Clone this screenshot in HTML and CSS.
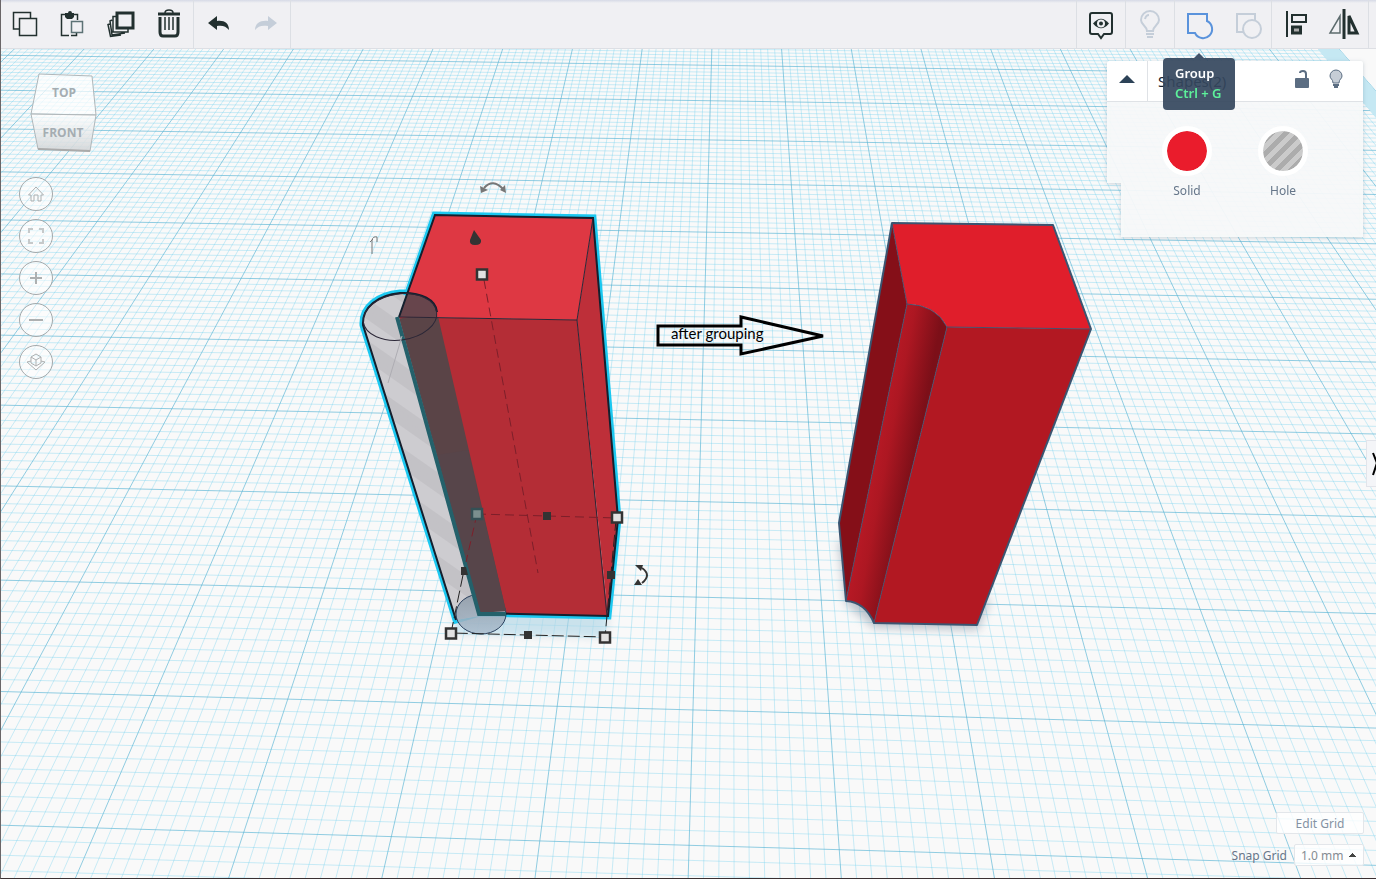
FILE: index.html
```html
<!DOCTYPE html>
<html lang="en">
<head>
    <meta charset="UTF-8">
    <meta name="viewport" content="width=device-width, initial-scale=1.0">
    <title>3D Editor</title>
    <link rel="stylesheet" href="styles.css">
</head>
<body>
    <svg class="scene" viewBox="0 0 1376 879" preserveAspectRatio="xMidYMid slice" aria-label="Workplane">
        <defs>
            <linearGradient id="groove" gradientUnits="userSpaceOnUse" x1="872" y1="455" x2="914" y2="463">
                <stop offset="0" stop-color="#b81925"/>
                <stop offset="0.35" stop-color="#ad1722"/>
                <stop offset="1" stop-color="#7c0f18"/>
            </linearGradient>
            <linearGradient id="shade" x1="0" y1="0" x2="0" y2="1">
                <stop offset="0" stop-color="#8d99a6" stop-opacity="0.85"/>
                <stop offset="1" stop-color="#a9bccd" stop-opacity="0.85"/>
            </linearGradient>
            <pattern id="hatch" width="34" height="34" patternUnits="userSpaceOnUse" patternTransform="rotate(35)">
                <rect width="34" height="34" fill="#c9c8cc"/>
                <rect width="34" height="17" fill="#bebcc1"/>
            </pattern>
            <filter id="soft" x="-20%" y="-20%" width="140%" height="140%">
                <feGaussianBlur stdDeviation="5"/>
            </filter>
            <clipPath id="box-front"><path d="M399 317L577 320L608 616L480 613Z"/></clipPath>
            <clipPath id="box-top"><path d="M435 215L593 218L577 320L399 317Z"/></clipPath>
        </defs>
        <rect width="1376" height="879" fill="#f9f9f9"/>
        <path id="minor" class="grid-minor"/>
        <path id="major" class="grid-major"/>
        <path id="border" class="grid-border"/>

        <!-- box and hole before grouping -->
        <g>
            <path d="M452 600L618 530L606 637L456 634Z" fill="#8fb4c8" opacity="0.35" filter="url(#soft)"/>
            <path d="M458 617L608 617L605 636L453 632Z" fill="#bfe6f4" opacity="0.4"/>
            <path class="glow" d="M435 215L593 218L618 519L608 616L480 613L456 620L363 325C362 307 378 295 400 293L408 293Z"/>
            <path d="M363 325C362 307 378 294 400 293L437 312L506 611L456 620Z" fill="#f2f3f4"/>
            <path d="M363 325C362 307 378 294 400 293L437 312L506 611L456 620Z" fill="url(#hatch)" opacity="0.9"/>
            <path d="M435 215L593 218L577 320L399 317Z" fill="#de3843"/>
            <path d="M399 317L577 320L608 616L480 613Z" fill="#b42d36"/>
            <path d="M593 218L618 519L608 616L577 320Z" fill="#be2f39"/>
            <path d="M363 325L437 312L506 611L456 620Z" fill="#5a4447" clip-path="url(#box-front)"/>
            <g clip-path="url(#box-top)">
                <ellipse cx="400" cy="317" rx="37" ry="23" transform="rotate(-8 400 317)" fill="#67454c"/>
            </g>
            <ellipse cx="481" cy="614" rx="25" ry="20" fill="url(#shade)" stroke="#2a3f5c"/>
            <path d="M480 613L437 455L468 450L506 611Z" fill="#57454a" clip-path="url(#box-front)"/>
            <g class="edge">
                <path d="M399 317L435 215L593 218L618 519L608 616L480 613"/>
                <path d="M456 620L363 325C362 307 378 295 400 293C422 292 436 300 437 312"/>
            </g>
            <path d="M397 317L479 614H506" stroke="#24616b" stroke-width="4" fill="none"/>
            <g class="edge-thin">
                <ellipse cx="400" cy="317" rx="37" ry="23" transform="rotate(-8 400 317)"/>
                <path d="M399 317L577 320L593 218M577 320L607 616"/>
            </g>
            <path d="M388 383L402 336" stroke="#aeadb3" fill="none"/>
            <path class="dash-dark" d="M484 280L538 573M477 514L617 518M477 514L466 562"/>
            <path class="dash" d="M463 575L451 633L605 637L616 520"/>
            <g class="handle">
                <rect x="477" y="269.500" width="10" height="10"/>
                <rect x="612" y="512.500" width="10" height="10"/>
                <rect x="446" y="628.500" width="10" height="10"/>
                <rect x="600" y="632.500" width="10" height="10"/>
                <rect x="472" y="509" width="10" height="10" class="handle-behind"/>
            </g>
            <path d="M543 512h8v8h-8zM461 567h5l2 8h-7zM607 571h8v8h-8zM524 631h8v8h-8z" fill="#333"/>
            <path d="M474 230L481 240Q482 245 475 245Q469 245 470 240Z" fill="#333"/>
            <g fill="none" stroke="#777" stroke-width="2">
                <path d="M484 188Q493 178 503 189"/>
                <path d="M480 186L481 193L488 190ZM500 190L506 193L505 185Z" fill="#777" stroke="none"/>
                <path d="M372 254V240Q373 236 377 237V242M370 242L373 239" stroke-width="1"/>
            </g>
            <path d="M642 568Q652 575 642 583" fill="none" stroke="#333" stroke-width="2"/>
            <path d="M635 565L643 565L641 571ZM634 585L638 579L642 585Z" fill="#333"/>
        </g>

        <!-- annotation -->
        <path d="M658 326H741V317L823 336L741 354V345H658Z" fill="none" stroke="#000" stroke-width="3"/>
        <text class="note" x="671" y="339">after grouping</text>

        <!-- grouped result -->
        <g stroke-linejoin="round">
            <path d="M838 540L846 604L874 628L978 630L990 600Z" fill="#7d8fa0" opacity="0.5" filter="url(#soft)"/>
            <path d="M892 223L839 523L846 601L907 304Z" fill="#850f18"/>
            <path d="M907 304Q936 305 947 327L874 623Q865 602 846 601Z" fill="url(#groove)"/>
            <path d="M947 327L1091 329L977 625L874 623Z" fill="#b21822"/>
            <path d="M892 223L1053 225L1091 329L947 327Q936 305 907 304Z" fill="#e01e2b"/>
            <path d="M892 223L907 304L846 601M907 304Q936 305 947 327L1091 329M947 327L874 623" fill="none" stroke="#4a4f6c"/>
            <path d="M892 223L1053 225L1091 329L977 625L874 623Q865 602 846 601L839 523Z" fill="none" stroke="#3b5571" stroke-width="2"/>
        </g>
    </svg>

    <header class="toolbar">
        <div class="group">
            <button class="tool" aria-label="Copy"><svg viewBox="0 0 32 32"><path d="M10 21H4.500V4.500H21.500V10"/><rect x="10.500" y="10.500" width="17" height="17"/></svg></button>
            <button class="tool" aria-label="Paste"><svg viewBox="0 0 32 32"><path d="M9 6.500H4.500V27.500H12M14 27.500H19.500V24M17 6.500H20.500V12"/><path class="solid" d="M8 5H11Q11 3 13 3Q15 3 15 5H17V9L15 11H10L8 9Z"/><rect x="14.500" y="13.500" width="11" height="11" stroke="#5c7275"/></svg></button>
            <button class="tool" aria-label="Duplicate"><svg viewBox="0 0 32 32"><rect x="12" y="5" width="16" height="15" stroke-width="3"/><path d="M11 8.500H8V24H23V21M7 12L5 13L7 27L20 25M5 16L3 16.500L5.500 28.500L16 27"/></svg></button>
            <button class="tool" aria-label="Delete"><svg viewBox="0 0 32 32"><path d="M12 5Q12 2 16 2Q20 2 20 5" /><path d="M5 6H27" stroke-width="3"/><path d="M7 9V24Q7 28 10 28H22Q25 28 25 24V9" stroke-width="3"/><path d="M12 9V22M16 9V22M20 9V22"/></svg></button>
        </div>
        <div class="group">
            <button class="tool" aria-label="Undo"><svg viewBox="0 0 32 32"><path class="solid" d="M6 15L15 8V13C22 12 27 15 27 22C24 18 20 17 15 18V22Z"/></svg></button>
            <button class="tool off" aria-label="Redo" disabled><svg viewBox="0 0 32 32"><path class="solid" d="M27 15L18 8V13C11 12 5 15 5 22C8 18 12 17 18 18V22Z"/></svg></button>
        </div>
        <div class="spacer"></div>
        <div class="group first">
            <button class="tool" aria-label="Show all"><svg viewBox="0 0 32 32"><g stroke-width="2"><path d="M7 5H25Q27 5 27 7V24Q27 26 25 26H19L16 30L13 26H7Q5 26 5 24V7Q5 5 7 5Z"/></g><path d="M8 15.500Q16 6 24 15.500Q16 25 8 15.500Z" class="solid"/><circle cx="16" cy="15.500" r="4" fill="#f0f0f3" stroke="none"/><circle cx="16" cy="15.500" r="2" class="solid"/></svg></button>
        </div>
        <div class="group">
            <button class="tool off" aria-label="Hide" disabled><svg viewBox="0 0 32 32"><path stroke-width="2" d="M13 23C13 18 7 17 7 12A9 9 0 0 1 25 12C25 17 19 18 19 23ZM12 26H20M13 29H19M11 11Q12 7 15 7"/></svg></button>
        </div>
        <div class="group">
            <div class="tip-anchor">
                <button class="tool on" aria-label="Group" aria-describedby="group-tip"><svg viewBox="0 0 32 32"><path stroke-width="2" d="M5 6H24V13A9 9 0 1 1 12 25H5Z"/></svg></button>
                <div class="tooltip" id="group-tip" role="tooltip">
                    <strong>Group</strong>
                    <kbd>Ctrl + G</kbd>
                </div>
            </div>
            <button class="tool off" aria-label="Ungroup" disabled><svg viewBox="0 0 32 32"><path stroke-width="2" d="M12 24H6V6H24V12"/><circle cx="21" cy="21" r="9" stroke-width="2"/></svg></button>
        </div>
        <div class="group">
            <button class="tool" aria-label="Align"><svg viewBox="0 0 32 32"><g stroke-width="2"><path d="M7 3V29"/><rect x="12" y="7" width="14" height="7"/></g><rect x="12.500" y="19" width="8" height="6" fill="#aaa" stroke-width="3"/></svg></button>
            <button class="tool" aria-label="Mirror"><svg viewBox="0 0 32 32"><path d="M16 1V31" stroke-width="3"/><path d="M12 8V25H2Z" stroke="#5c6b6d"/><path d="M21 8V25H29Z" stroke-width="3"/></svg></button>
        </div>
    </header>

    <main class="stage">
        <nav class="view-nav" aria-label="View">
            <button class="cube" aria-label="View cube">
                <svg viewBox="0 0 68 80" width="68" height="80">
                    <defs><linearGradient id="face" x1="0" y1="0" x2="0" y2="1"><stop offset="0" stop-color="#fff" stop-opacity="0.7"/><stop offset="1" stop-color="#d2d5d7" stop-opacity="0.9"/></linearGradient></defs>
                    <path d="M9 1L62 3L66 42L1 41Z" fill="#fff" fill-opacity="0.7" stroke="#b0b7ba"/>
                    <path d="M1 41L66 42L60 78L8 76Z" fill="url(#face)" stroke="#b0b7ba"/>
                    <path d="M8 76L60 78" stroke="#aaa" stroke-width="2"/>
                    <text x="34" y="24" font-size="12">TOP</text>
                    <text x="33" y="64" font-size="12">FRONT</text>
                </svg>
            </button>
            <button class="round" aria-label="Home view"><svg viewBox="0 0 18 18"><path d="M1.500 10L9 2L16.500 10H14V16H11V10H7V16H4V10Z"/></svg></button>
            <button class="round" aria-label="Fit all"><svg viewBox="0 0 18 18"><path stroke="#c6c9ca" stroke-width="2" d="M2 6V2H6M12 2H16V6M16 12V16H12M6 16H2V12"/></svg></button>
            <button class="round" aria-label="Zoom in"><svg viewBox="0 0 18 18"><path stroke-width="2" d="M9 3V15M3 9H15"/></svg></button>
            <button class="round" aria-label="Zoom out"><svg viewBox="0 0 18 18"><path stroke-width="2" d="M2 9H16"/></svg></button>
            <button class="round" aria-label="Orthographic view"><svg viewBox="0 0 18 18"><path d="M9 1L14 4V10L9 13L4 10V4ZM4 4L9 7L14 4M9 7V13M4 8L0 9L9 17L18 9L14 8"/></svg></button>
        </nav>

        <section class="inspector">
            <div class="inspector-head">
                <button class="fold" aria-label="Collapse"><svg viewBox="0 0 16 9" width="16" height="9"><path d="M0 8L8 0L16 8Z" fill="#2c4257"/></svg></button>
                <h2>Shapes(2)</h2>
                <button aria-label="Lock"><svg viewBox="0 0 14 20" width="14" height="20"><rect x="0" y="9" width="14" height="10" rx="1" fill="#5b6d82"/><path d="M11 9V5Q11 2 8 2Q5 2 5 4" fill="none" stroke="#5b6d82" stroke-width="2"/></svg></button>
                <button aria-label="Visibility"><svg viewBox="0 0 14 20" width="14" height="20"><path d="M4 14C4 10 1 10 1 7A6 6 0 0 1 13 7C13 10 10 10 10 14Z" fill="#c6cdd6" stroke="#5b6d82"/><path d="M4 16H10M5 18H9" stroke="#5b6d82" stroke-width="2"/></svg></button>
            </div>
            <div class="inspector-body">
                <button class="fill-type"><span class="swatch red"></span>Solid</button>
                <button class="fill-type"><span class="swatch hole"></span>Hole</button>
            </div>
        </section>

        <button class="drawer" aria-label="Toggle shapes panel"><svg viewBox="0 0 10 24" width="10" height="24"><path d="M6 1L10 11L6 23" fill="none" stroke="#000" stroke-width="2"/></svg></button>

        <form class="grid-settings">
            <button type="button" class="edit-grid">Edit Grid</button>
            <div class="snap">
                <label for="snap">Snap Grid</label>
                <select id="snap"><option>1.0 mm</option></select>
            </div>
        </form>
    </main>
    <script src="grid.js"></script>
</body>
</html>
```

FILE: styles.css
```css
* {
    box-sizing: border-box;
}
body {
    margin: 0;
    min-height: 100vh;
    display: flex;
    flex-direction: column;
    position: relative;
    overflow: hidden;
    font-family: "Noto Sans", "Open Sans", sans-serif;
    font-size: 12px;
    color: #66768a;
    border-left: 1px solid #6a6668;
    border-bottom: 1px solid #3a3032;
}
button {
    padding: 0;
    border: none;
    background: none;
    font: inherit;
    color: inherit;
    cursor: pointer;
}
.scene {
    position: absolute;
    inset: 0 0 0 -1px;
    width: 100vw;
    height: 100vh;
    z-index: -1;
}
.grid-minor, .grid-major {
    fill: none;
    stroke: #6fcfee;
    stroke-opacity: 0.36;
}
.grid-major {
    stroke: #58b4d4;
    stroke-opacity: 0.65;
}
.grid-border {
    fill: #c5e8f3;
}
.glow {
    fill: none;
    stroke: #1cc8f0;
    stroke-width: 7;
}
.edge {
    fill: none;
    stroke: #14202e;
    stroke-width: 2;
}
.edge-thin {
    fill: none;
    stroke: #2b2737;
}
.dash, .dash-dark {
    fill: none;
    stroke: #222;
    stroke-dasharray: 12 4;
}
.dash-dark {
    stroke: #7d1f2a;
    stroke-dasharray: 9 5;
}
.handle {
    fill: #e2e2e2;
    stroke: #333;
    stroke-width: 2.5;
}
.handle-behind {
    fill: #7b8f8e;
    stroke: #345055;
}
.note {
    font: 15px Lato, sans-serif;
    fill: #000;
}

/* toolbar */
.toolbar {
    display: flex;
    height: 49px;
    padding-right: 7px;
    background: linear-gradient(#d6dae6, #f0f0f3 3px);
    border-bottom: 1px solid #dddfe4;
}
.group {
    display: flex;
    border-right: 1px solid #dcdfe4;
}
.group.first {
    border-left: 1px solid #dcdfe4;
}
.spacer {
    flex: 1;
}
.tool {
    width: 48px;
    height: 48px;
    display: grid;
    place-items: center;
    color: #22302f;
}
.tool svg {
    width: 32px;
    height: 32px;
    fill: none;
    stroke: currentColor;
    stroke-width: 1.5;
}
.tool .solid {
    fill: currentColor;
    stroke: none;
}
.tool.off {
    color: #c5ced9;
}
.tool.on {
    color: #5a93dc;
}
.tip-anchor {
    position: relative;
    z-index: 2;
}
.tooltip {
    position: absolute;
    top: 58px;
    left: 50%;
    transform: translateX(-50%);
    display: flex;
    flex-direction: column;
    width: 72px;
    padding: 5px 0 7px 12px;
    border-radius: 4px;
    background: rgba(52, 71, 93, 0.92);
    font-size: 13px;
    line-height: 20px;
    white-space: nowrap;
    color: #fff;
}
.tooltip::before {
    content: "";
    position: absolute;
    left: 31px;
    top: -5px;
    border: 5px solid transparent;
    border-top: 0;
    border-bottom-color: #42536a;
}
.tooltip strong, .tooltip kbd {
    font-family: inherit;
    font-weight: 600;
}
.tooltip kbd {
    color: #5df29b;
    font-size: 13px;
}

/* overlays */
.stage {
    flex: 1;
    display: grid;
    grid-template-columns: 1fr auto;
    grid-template-rows: auto 1fr auto;
}
.view-nav {
    grid-row: 1 / 4;
    justify-self: start;
    display: flex;
    flex-direction: column;
    align-items: flex-start;
    gap: 8px;
    padding: 24px 0 0 18px;
}
.cube {
    margin: 0 0 16px 11px;
    height: 80px;
}
.cube text {
    font-family: "Open Sans", sans-serif;
    font-weight: 700;
    fill: #a5adb2;
    text-anchor: middle;
}
.round {
    width: 34px;
    height: 34px;
    display: grid;
    place-items: center;
    border: 1px solid #a4a9ab;
    border-radius: 50%;
    background: rgba(255, 255, 255, 0.5);
}
.round svg {
    width: 18px;
    height: 18px;
    fill: none;
    stroke: #adb0b1;
}
.inspector {
    width: 256px;
    margin: 12px 13px 0 0;
    filter: drop-shadow(0 1px 2px rgba(60, 90, 120, 0.25));
}
.inspector-head {
    display: flex;
    align-items: center;
    gap: 26px;
    height: 41px;
    padding-right: 20px;
    background: #fff;
    border-bottom: 1px solid #dfe2e6;
    border-radius: 2px 2px 0 0;
}
.inspector-head button {
    display: grid;
    place-items: center;
    height: 20px;
    margin-bottom: 4px;
}
.inspector-head .fold {
    width: 41px;
    height: 40px;
    margin: 0 -16px 0 0;
    padding-bottom: 4px;
    border-right: 1px solid #dfe2e6;
}
.inspector-head h2 {
    flex: 1;
    margin: 0;
    font-size: 15px;
    font-weight: 400;
    color: #14202c;
}
.inspector-head button:last-child {
    margin-left: -6px;
}
.inspector-body {
    display: flex;
    justify-content: center;
    gap: 46px;
    height: 135px;
    padding: 24px 0 0;
    background: rgba(250, 251, 251, 0.93);
    /* the lower left corner is stepped in */
    clip-path: polygon(0 0, 100% 0, 100% 100%, 14px 100%, 14px 81px, 0 81px);
}
.fill-type {
    display: flex;
    flex-direction: column;
    align-items: center;
    gap: 6px;
    width: 50px;
    line-height: 18px;
}
.swatch {
    width: 50px;
    height: 50px;
    border: 5px solid #fff;
    border-radius: 50%;
}
.red {
    background: #ea1c2c padding-box;
}
.hole {
    background: repeating-linear-gradient(135deg, #cbcbcb 0 5px, #acacac 5px 10px) padding-box;
}
.drawer {
    grid-column: 2;
    align-self: center;
    justify-self: end;
    display: grid;
    place-items: center end;
    width: 10px;
    height: 47px;
    margin-bottom: 122px;
    background: #f4f5f8;
    border: 1px solid #e2e4ea;
    border-right: 0;
}
.grid-settings {
    grid-column: 2;
    display: flex;
    flex-direction: column;
    align-items: flex-end;
    gap: 10px;
    padding: 0 12px 12px 0;
}
.edit-grid, .snap select {
    height: 22px;
    background-color: rgba(255, 255, 255, 0.8);
    border: 1px solid #e3e6ea;
    border-radius: 2px;
}
.edit-grid {
    width: 88px;
    color: #8492a3;
}
.snap {
    display: flex;
    align-items: center;
    gap: 7px;
}
.snap select {
    appearance: none;
    width: 70px;
    padding: 0 6px;
    font: inherit;
    color: #868c92;
    background-image: conic-gradient(from 135deg at 50% 0, #444 90deg, transparent 0);
    background-repeat: no-repeat;
    background-position: 53px 8px;
    background-size: 8px 4px;
}
```

FILE: grid.js
```js
// Workplane corners in grid units (10 mm squares) and where they fall on screen
const anchors = [
    [-7, 3, 132, 174],
    [-4, 11, 97, 828],
    [4, 11, 1295, 863],
    [4, 3, 1043, 189]
];

function solve(points) {
    const m = [];
    points.forEach(([u, v, x, y]) => {
        m.push([u, v, 1, 0, 0, 0, -u * x, -v * x, x]);
        m.push([0, 0, 0, u, v, 1, -u * y, -v * y, y]);
    });
    for (let i = 0; i < 8; i++) {
        let p = i;
        for (let r = i; r < 8; r++) {
            if (Math.abs(m[r][i]) > Math.abs(m[p][i])) p = r;
        }
        [m[i], m[p]] = [m[p], m[i]];
        for (let r = 0; r < 8; r++) {
            if (r === i) continue;
            const f = m[r][i] / m[i][i];
            for (let c = i; c < 9; c++) m[r][c] -= f * m[i][c];
        }
    }
    return m.map((row, i) => row[8] / row[i]);
}

const h = solve(anchors);

function project(u, v) {
    const w = h[6] * u + h[7] * v + 1;
    return ((h[0] * u + h[1] * v + h[2]) / w).toFixed(2) + " " + ((h[3] * u + h[4] * v + h[5]) / w).toFixed(2);
}

const LEFT = -14, RIGHT = 9, TOP = -1, BOTTOM = 13;
let minor = "", major = "";

for (let i = LEFT * 10; i <= RIGHT * 10; i++) {
    const line = "M" + project(i / 10, TOP) + "L" + project(i / 10, BOTTOM);
    if (i % 10 === 0) major += line; else minor += line;
}
for (let i = TOP * 10; i <= BOTTOM * 10; i++) {
    const line = "M" + project(LEFT, i / 10) + "L" + project(RIGHT, i / 10);
    if (i % 10 === 0) major += line; else minor += line;
}

document.getElementById("minor").setAttribute("d", minor);
document.getElementById("major").setAttribute("d", major);
document.getElementById("border").setAttribute("d",
    "M" + project(RIGHT - 0.3, TOP) + "L" + project(RIGHT, TOP) + "L" + project(RIGHT, 6) + "L" + project(RIGHT - 0.3, 6) + "Z");
```
